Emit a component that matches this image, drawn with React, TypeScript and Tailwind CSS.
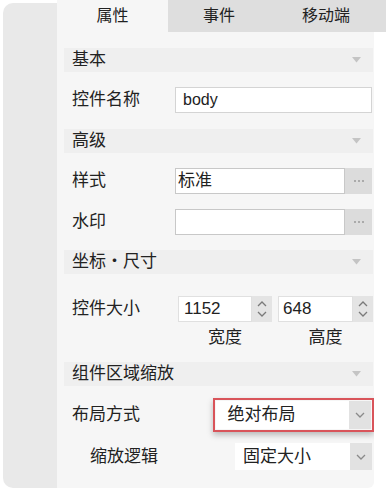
import React from 'react';

const font = { fontFamily: '"Liberation Sans", "Noto Sans CJK SC", sans-serif' };

function Caret() {
  return (
    <svg width="9" height="6" viewBox="0 0 9 6" className="mr-[12px]">
      <path d="M0 0 L9 0 L4.5 5.5 Z" fill="#c4c4c4" />
    </svg>
  );
}

function Header({ title, className }: { title: string; className: string }) {
  return (
    <div className={`ml-[7px] w-[309px] h-[24px] flex items-center justify-between bg-[#efefef] pl-[8px] text-[17px] text-[#222] ${className}`}>
      <span>{title}</span>
      <Caret />
    </div>
  );
}

function Chevron({ color = '#8a8a8a' }: { color?: string }) {
  return (
    <svg width="10" height="6" viewBox="0 0 10 6">
      <path d="M1 1 L5 5 L9 1" fill="none" stroke={color} strokeWidth="1.3" />
    </svg>
  );
}

function Spinner() {
  return (
    <div className="w-[20px] h-[26px] flex flex-col items-center justify-center gap-[4px] bg-[#e4e4e4]">
      <svg width="10" height="6" viewBox="0 0 10 6">
        <path d="M1 5 L5 1 L9 5" fill="none" stroke="#7a7a7a" strokeWidth="1.3" />
      </svg>
      <svg width="10" height="6" viewBox="0 0 10 6">
        <path d="M1 1 L5 5 L9 1" fill="none" stroke="#7a7a7a" strokeWidth="1.3" />
      </svg>
    </div>
  );
}

function Dots() {
  return (
    <div className="w-[27px] h-full bg-[#dcdcdc] flex items-center justify-center gap-[2px]">
      <span className="w-[2px] h-[2px] bg-[#9a9a9a] rounded-full" />
      <span className="w-[2px] h-[2px] bg-[#9a9a9a] rounded-full" />
      <span className="w-[2px] h-[2px] bg-[#9a9a9a] rounded-full" />
    </div>
  );
}

export default function App() {
  return (
    <div className="w-[386px] h-[491px] bg-white flex overflow-hidden" style={font}>
      {/* left strip */}
      <div className="w-[54px] ml-[3px] mt-[3px] mb-[3px] bg-[#e9e9e9] rounded-tl-[10px] rounded-bl-[10px]" />

      <div className="flex-1 flex flex-col">
        {/* tabs */}
        <div className="h-[32px] flex bg-[#dedede] text-[16px] text-[#222]">
          <div className="w-[111px] bg-[#f6f6f6] flex items-center justify-center">属性</div>
          <div className="w-[102px] flex items-center justify-center">事件</div>
          <div className="flex-1 flex items-center justify-center pr-[4px]">移动端</div>
        </div>

        <div className="flex">
          <div className="w-[317px] h-[456px] bg-[#f6f6f6] rounded-br-[6px] flex flex-col text-[17px] text-[#222]">
            <Header title="基本" className="mt-[16px]" />

            <div className="mt-[15px] h-[26px] flex items-center">
              <span className="w-[118px] pl-[15px]">控件名称</span>
              <div className="w-[197px] h-[26px] bg-white border border-[#d4d4d4] flex items-center pl-[7px] text-[16px]">body</div>
            </div>

            <Header title="高级" className="mt-[16px]" />

            <div className="mt-[15px] h-[26px] flex items-center">
              <span className="w-[118px] pl-[15px]">样式</span>
              <div className="w-[197px] h-[26px] flex">
                <div className="flex-1 bg-white border border-[#c8c8c8] flex items-center pl-[2px]">标准</div>
                <Dots />
              </div>
            </div>

            <div className="mt-[15px] h-[26px] flex items-center">
              <span className="w-[118px] pl-[15px]">水印</span>
              <div className="w-[197px] h-[26px] flex">
                <div className="flex-1 bg-white border border-[#c8c8c8]" />
                <Dots />
              </div>
            </div>

            <Header title="坐标・尺寸" className="mt-[15px]" />

            <div className="mt-[22px] h-[26px] flex items-center">
              <span className="w-[121px] pl-[15px]">控件大小</span>
              <div className="w-[74px] h-[26px] bg-white border border-[#e0e0e0] flex items-center pl-[5px] text-[17px]">1152</div>
              <Spinner />
              <div className="w-[6px]" />
              <div className="w-[75px] h-[26px] bg-white border border-[#e0e0e0] flex items-center pl-[4px] text-[17px]">648</div>
              <Spinner />
            </div>

            <div className="mt-[6px] h-[20px] flex items-center">
              <span className="w-[121px]" />
              <span className="w-[94px] text-center">宽度</span>
              <span className="w-[6px]" />
              <span className="w-[95px] text-center">高度</span>
            </div>

            <Header title="组件区域缩放" className="mt-[14px]" />

            <div className="mt-[12px] h-[34px] flex items-center">
              <span className="w-[156px] pl-[15px]">布局方式</span>
              <div className="w-[162px] h-[34px] border-2 border-[#d9545a] shadow-[0_3px_6px_rgba(0,0,0,0.25)] flex p-[1px]">
                <div className="flex-1 bg-white flex items-center pl-[12px]">绝对布局</div>
                <div className="w-[22px] bg-[#e2e2e2] flex items-center justify-center">
                  <Chevron />
                </div>
              </div>
            </div>

            <div className="mt-[11px] h-[27px] flex items-center">
              <span className="w-[178px] pl-[33px]">缩放逻辑</span>
              <div className="w-[137px] h-[27px] flex">
                <div className="flex-1 bg-white flex items-center pl-[8px]">固定大小</div>
                <div className="w-[22px] bg-[#e2e2e2] flex items-center justify-center">
                  <Chevron />
                </div>
              </div>
            </div>
          </div>
          <div className="flex-1 bg-white" />
        </div>
      </div>
    </div>
  );
}
